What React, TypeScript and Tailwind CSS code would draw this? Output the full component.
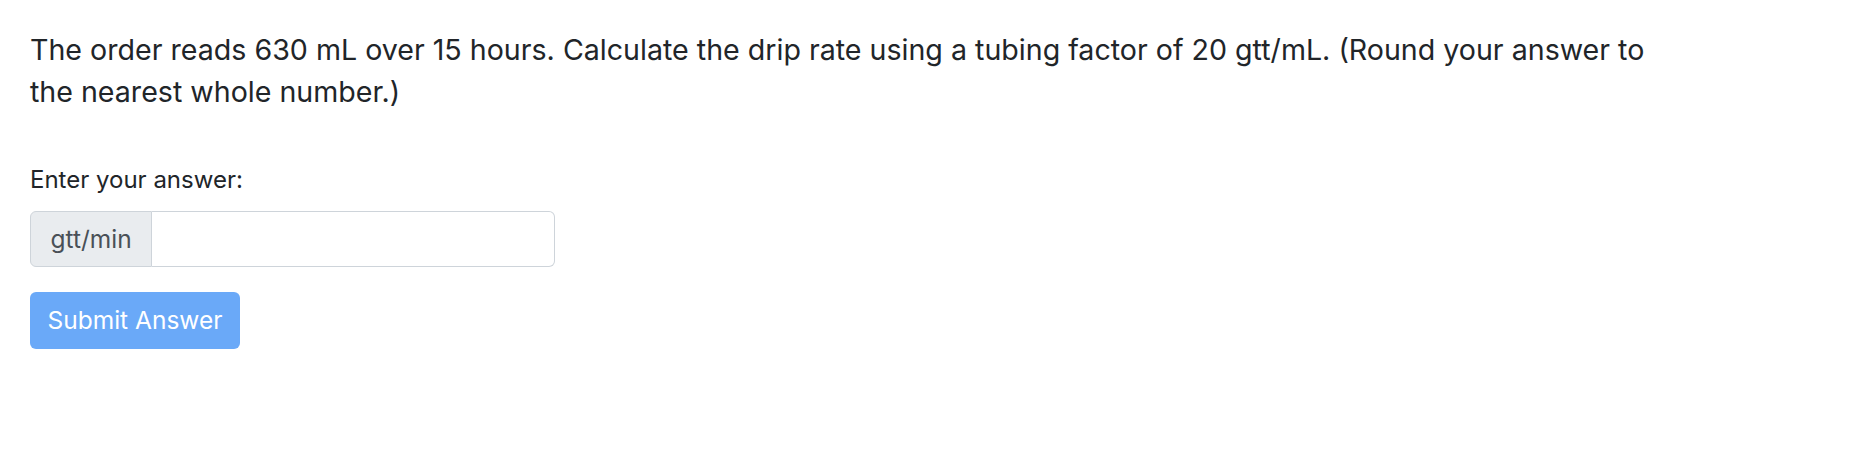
import React from 'react';

const App = () => {
	return (
		<div className="min-h-screen bg-white px-[30px] pt-[29px] font-['Inter',sans-serif] text-[#212529]">
			<p className="max-w-[1650px] text-[28.6px] leading-[41.5px]">
				The order reads 630 mL over 15 hours. Calculate the drip rate using a
				tubing factor of 20 gtt/mL. (Round your answer to the nearest whole
				number.)
			</p>

			<label htmlFor="answer" className="mt-[50px] block text-[24px] leading-[36px]">
				Enter your answer:
			</label>

			<div className="mt-[13px] flex h-[56px] w-[525px]">
				<span className="flex items-center rounded-l-[6px] border border-[#ced4da] bg-[#e9ecef] px-[19.5px] text-[24.5px] text-[#495057]">
					gtt/min
				</span>
				<input
					id="answer"
					type="text"
					className="min-w-0 flex-1 rounded-r-[6px] border border-l-0 border-[#ced4da] bg-white px-[18px] text-[24px] text-[#495057] outline-none"
				/>
			</div>

			<button
				type="button"
				disabled
				className="mt-[25px] flex h-[57px] items-center rounded-[6px] bg-[#6aa9f8] px-[17.5px] text-[24.5px] text-white"
			>
				Submit Answer
			</button>
		</div>
	);
};

export default App;
